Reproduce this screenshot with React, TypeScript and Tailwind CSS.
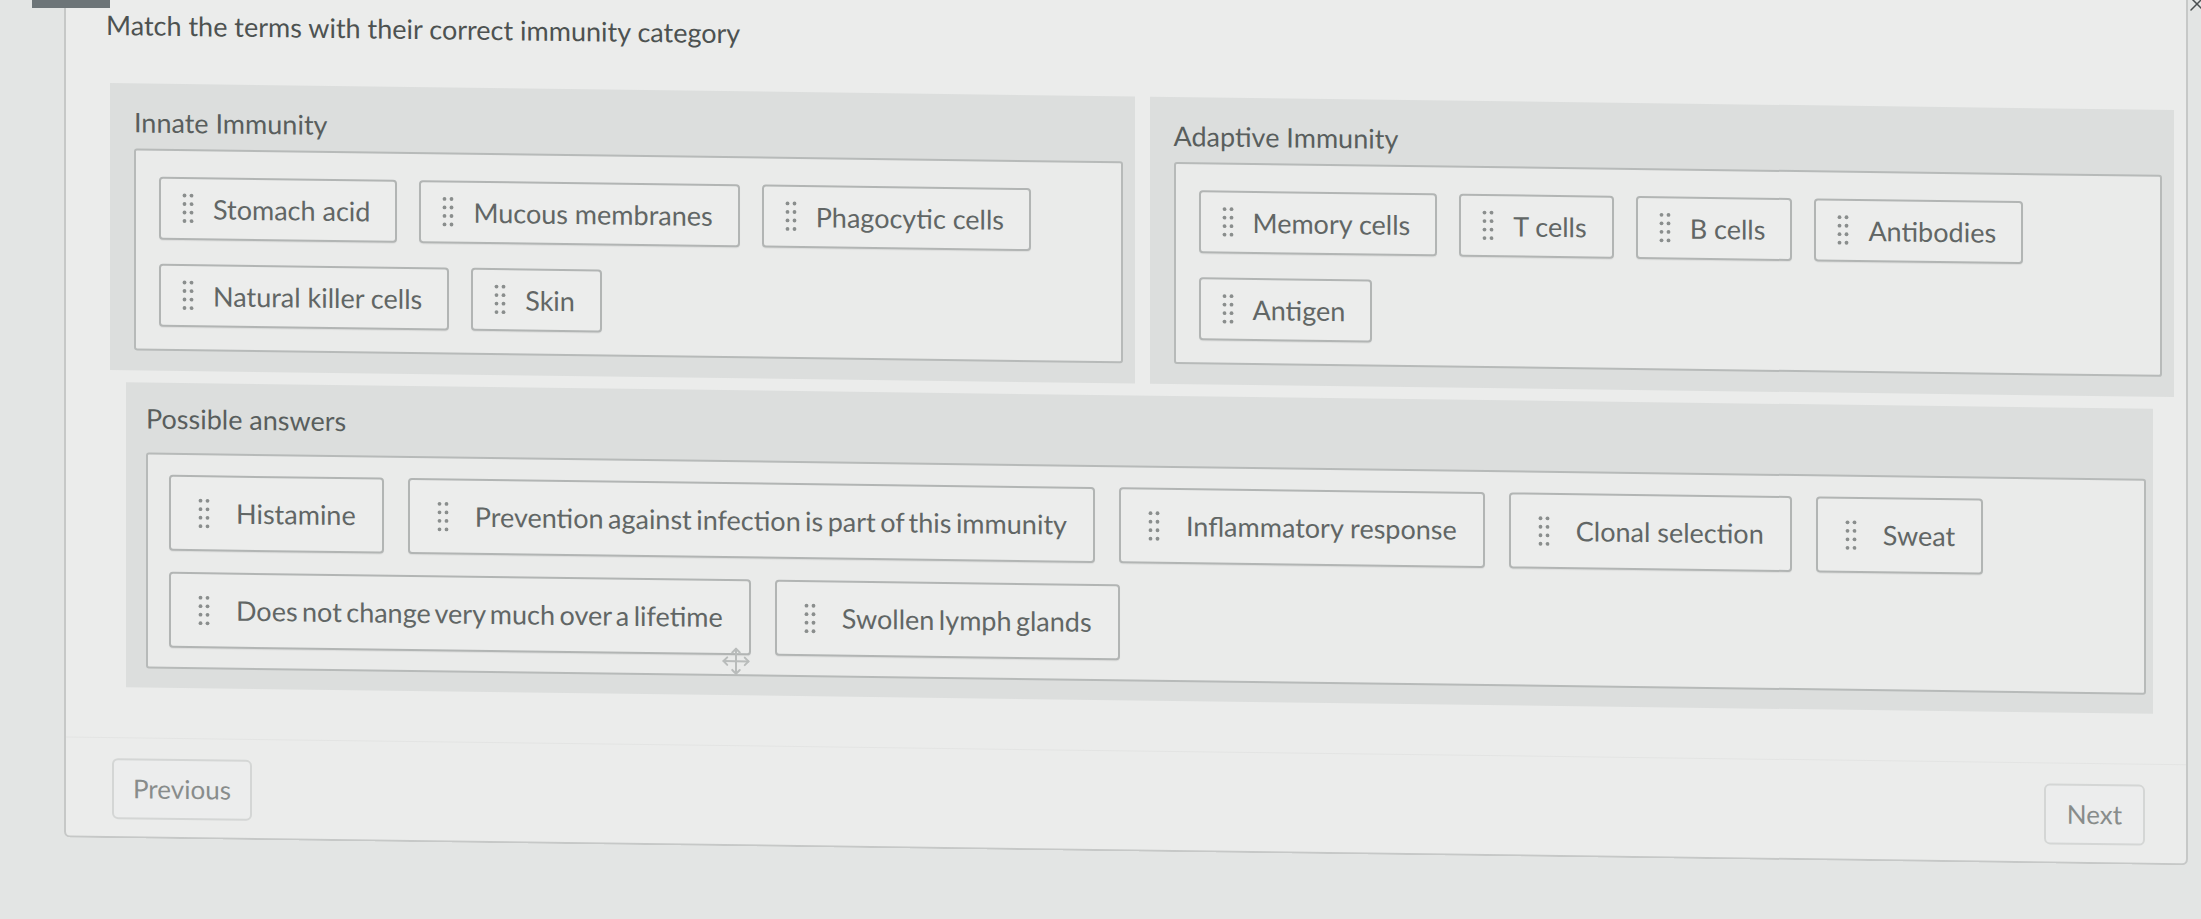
import { Move, X } from "lucide-react";

const Grip = () => (
  <svg width="12" height="31" viewBox="0 0 12 31" className="shrink-0">
    {[2.5, 11, 19.5, 28].map((y) =>
      [2.5, 9.5].map((x) => <circle key={`${x}-${y}`} cx={x} cy={y} r="1.9" fill="#8a8e8d" />)
    )}
  </svg>
);

function CatChip({ text }: { text: string }) {
  return (
    <div className="flex h-[63px] items-center gap-[19px] rounded-[4px] border-2 border-[#b2b5b4] bg-[#ecedec] pl-[21px] pr-[25px] text-[27px] leading-[32px] text-[#616665] shadow-[0_1px_1px_rgba(0,0,0,0.06)]">
      <Grip />
      <span className="whitespace-nowrap">{text}</span>
    </div>
  );
}

function AnsChip({ text, cursor, tight }: { text: string; cursor?: boolean; tight?: boolean }) {
  return (
    <div className="relative flex h-[76px] items-center gap-[26px] rounded-[4px] border-2 border-[#b2b5b4] bg-[#ecedec] pl-[27px] pr-[26px] text-[27px] leading-[32px] text-[#616665] shadow-[0_1px_1px_rgba(0,0,0,0.06)]">
      <Grip />
      <span className={tight ? "whitespace-nowrap [word-spacing:-2.5px]" : "whitespace-nowrap"}>{text}</span>
      {cursor && (
        <Move className="absolute bottom-[-23px] right-[-2px] h-[30px] w-[30px] text-[#b9bcbb]" strokeWidth={1.6} />
      )}
    </div>
  );
}

function CategoryPanel({ title, items }: { title: string; items: string[] }) {
  return (
    <div className="flex flex-col bg-[#dcdedd] pl-[24px] pr-[12px] pt-[23px] pb-[20px]">
      <div className="text-[27px] leading-[32px] text-[#595e5d]">{title}</div>
      <div className="mt-[10px] flex h-[202px] flex-wrap content-start gap-x-[22px] gap-y-[24px] rounded-[3px] border-2 border-[#b7bab9] bg-[#eaebea] pt-[26px] pb-[22px] pl-[23px] pr-[20px]">
        {items.map((t) => (
          <CatChip key={t} text={t} />
        ))}
      </div>
    </div>
  );
}

export default function App() {
  return (
    <div className="relative h-[919px] w-[2201px] overflow-hidden bg-[#e3e5e4] font-[Lato,sans-serif]">
      <div className="h-full w-full skew-y-[0.75deg]">
        <div className="-mt-[30px] ml-[64px] flex w-[2124px] flex-col rounded-b-[6px] border-x-2 border-b-2 border-[#c6c8c7] bg-[#ebeceb] pt-[52px] pb-[17px]">
          <h1 className="ml-[40px] text-[27px] leading-[32px] font-normal text-[#4d5251]">
            Match the terms with their correct immunity category
          </h1>

          <div className="ml-[44px] mr-[12px] mt-[42px] grid grid-cols-2 gap-[15px]">
            <CategoryPanel
              title="Innate Immunity"
              items={["Stomach acid", "Mucous membranes", "Phagocytic cells", "Natural killer cells", "Skin"]}
            />
            <CategoryPanel
              title="Adaptive Immunity"
              items={["Memory cells", "T cells", "B cells", "Antibodies", "Antigen"]}
            />
          </div>

          <div className="ml-[60px] mr-[33px] mt-[12px] flex flex-col bg-[#dcdedd] pl-[20px] pr-[7px] pt-[20px] pb-[19px]">
            <div className="text-[27px] leading-[32px] text-[#595e5d]">Possible answers</div>
            <div className="mt-[18px] flex flex-wrap content-start gap-x-[24px] gap-y-[21px] rounded-[3px] border-2 border-[#b7bab9] bg-[#eaebea] pt-[20px] pb-[19px] pl-[21px] pr-[20px]">
              <AnsChip text="Histamine" />
              <AnsChip text="Prevention against infection is part of this immunity" tight />
              <AnsChip text="Inflammatory response" />
              <AnsChip text="Clonal selection" />
              <AnsChip text="Sweat" />
              <AnsChip text="Does not change very much over a lifetime" cursor tight />
              <AnsChip text="Swollen lymph glands" tight />
            </div>
          </div>

          <div className="mt-[50px] flex items-center justify-between border-t border-[#e3e4e3] pt-[20px] pl-[46px] pr-[41px]">
            <button className="flex h-[61px] items-center rounded-[6px] border-2 border-[#d4d6d5] bg-[#eceded] px-[19px] text-[26px] text-[#888c8b]">
              Previous
            </button>
            <button className="flex h-[61px] items-center rounded-[6px] border-2 border-[#d4d6d5] bg-[#eceded] px-[21px] text-[26px] text-[#888c8b]">
              Next
            </button>
          </div>
        </div>
      </div>

      <div className="absolute left-[32px] top-0 h-[8px] w-[78px] bg-[#6d7578]" />
      <X className="absolute right-[-8px] top-[-8px] h-[24px] w-[24px] text-[#4a4f50]" strokeWidth={1.5} />
    </div>
  );
}
